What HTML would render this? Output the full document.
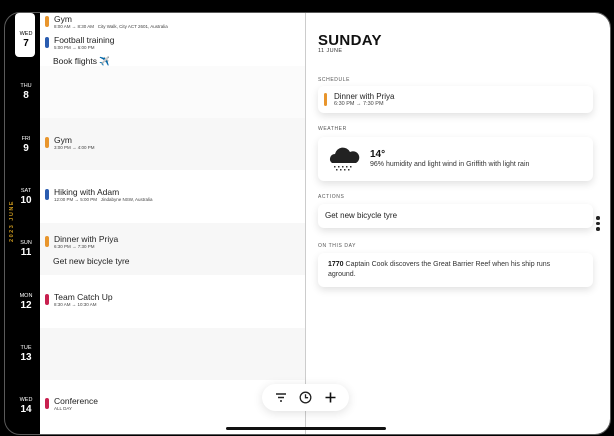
<!DOCTYPE html><html><head><style>
*{margin:0;padding:0;box-sizing:border-box}
body{width:614px;height:436px;background:#000;overflow:hidden;font-family:"Liberation Sans",sans-serif;position:relative;color:#222}
.scr{position:absolute;left:4px;top:12px;width:607px;height:423px;border:1.5px solid #5a5a5a;border-radius:16px;background:#000;overflow:hidden}
.main{position:absolute;left:35px;top:0;right:0;bottom:0;background:#fff}
.row{position:absolute;left:0;width:265px;height:52.4px}
.alt{background:#f7f7f7}
.div{position:absolute;left:265px;top:0;bottom:0;width:1px;background:#ccc}
.day{position:absolute;left:0;width:36px;text-align:center;color:#fff}
.day .d{font-size:5.5px;line-height:7px}
.day .n{font-size:10px;font-weight:bold;line-height:11px}
.sel{position:absolute;left:15px;top:13px;width:20px;height:44px;background:#fff;border-radius:4px}
.ev{position:absolute;left:49px}
.bar{position:absolute;left:-4px;top:1px;width:3.5px;height:11px;border-radius:2px}
.t{font-size:8.5px;line-height:9px;padding-left:5px;color:#222}
.s{font-size:4.5px;line-height:6px;padding-left:5px;color:#444}
.task{position:absolute;left:53px;font-size:8.5px;color:#222}
.lab{position:absolute;left:318px;font-size:5px;letter-spacing:.6px;color:#555}
.card{position:absolute;left:318px;width:275px;background:#fff;border-radius:6px;box-shadow:0 3px 8px rgba(0,0,0,.12)}
</style></head><body>
<div class="scr">
<div class="main">
<div class="row" style="top:53px;background:#fbfbfb"></div>
<div class="row alt" style="top:105px"></div>
<div class="row alt" style="top:210px"></div>
<div class="row alt" style="top:315px"></div>
<div class="div"></div>
</div>
</div>
<div class="sel"></div>
<div class="day" style="left:8px;top:31px;color:#000"><div class="d">WED</div><div class="n">7</div></div>
<div class="day" style="left:8px;top:83px"><div class="d">THU</div><div class="n">8</div></div>
<div class="day" style="left:8px;top:136px"><div class="d">FRI</div><div class="n">9</div></div>
<div class="day" style="left:8px;top:188px"><div class="d">SAT</div><div class="n">10</div></div>
<div class="day" style="left:8px;top:240px"><div class="d">SUN</div><div class="n">11</div></div>
<div class="day" style="left:8px;top:293px"><div class="d">MON</div><div class="n">12</div></div>
<div class="day" style="left:8px;top:345px"><div class="d">TUE</div><div class="n">13</div></div>
<div class="day" style="left:8px;top:397px"><div class="d">WED</div><div class="n">14</div></div>
<div style="position:absolute;left:-16px;top:218px;width:56px;text-align:center;transform:rotate(-90deg);font-size:5.5px;letter-spacing:1.5px;color:#c8961e;font-weight:bold">2023 JUNE</div>

<div class="ev" style="top:15px"><div class="bar" style="background:#e8952c"></div><div class="t">Gym</div><div class="s">8:00 AM → 8:30 AM &nbsp; City Walk, City ACT 2601, Australia</div></div>
<div class="ev" style="top:36px"><div class="bar" style="background:#2a5cb0"></div><div class="t">Football training</div><div class="s">5:00 PM → 6:00 PM</div></div>
<div class="task" style="top:56px">Book flights ✈️</div>
<div class="ev" style="top:136px"><div class="bar" style="background:#e8952c"></div><div class="t">Gym</div><div class="s">3:00 PM → 4:00 PM</div></div>
<div class="ev" style="top:188px"><div class="bar" style="background:#2a5cb0"></div><div class="t">Hiking with Adam</div><div class="s">12:00 PM → 5:00 PM &nbsp; Jindabyne NSW, Australia</div></div>
<div class="ev" style="top:235px"><div class="bar" style="background:#e8952c"></div><div class="t">Dinner with Priya</div><div class="s">6:30 PM → 7:30 PM</div></div>
<div class="task" style="top:256px">Get new bicycle tyre</div>
<div class="ev" style="top:293px"><div class="bar" style="background:#c8204f"></div><div class="t">Team Catch Up</div><div class="s">8:30 AM → 10:30 AM</div></div>
<div class="ev" style="top:397px"><div class="bar" style="background:#c8204f"></div><div class="t">Conference</div><div class="s">ALL DAY</div></div>

<div style="position:absolute;left:318px;top:32px;font-size:15px;font-weight:bold;color:#111;letter-spacing:.3px">SUNDAY</div>
<div style="position:absolute;left:318px;top:48px;font-size:5.5px;color:#333;letter-spacing:.4px">11 JUNE</div>
<div class="lab" style="top:77px">SCHEDULE</div>
<div class="card" style="top:86px;height:27px"><div style="position:absolute;left:6px;top:7px;width:3px;height:13px;border-radius:2px;background:#e8952c"></div><div style="position:absolute;left:16px;top:6px;font-size:8px;color:#222">Dinner with Priya</div><div style="position:absolute;left:16px;top:15px;font-size:5.5px;color:#444">6:30 PM → 7:30 PM</div></div>
<div class="lab" style="top:126px">WEATHER</div>
<div class="card" style="top:137px;height:44px">
<svg style="position:absolute;left:10px;top:6px" width="32" height="30" viewBox="0 0 32 30"><path d="M4 20a5 5 0 0 1 3-9a8 8 0 0 1 15-2a6 6 0 0 1 6 11z" fill="#222"/><g fill="#333"><rect x="6" y="23" width="1.5" height="1.5"/><rect x="10" y="23" width="1.5" height="1.5"/><rect x="14" y="23" width="1.5" height="1.5"/><rect x="18" y="23" width="1.5" height="1.5"/><rect x="22" y="23" width="1.5" height="1.5"/><rect x="8" y="26" width="1.5" height="1.5"/><rect x="12" y="26" width="1.5" height="1.5"/><rect x="16" y="26" width="1.5" height="1.5"/><rect x="20" y="26" width="1.5" height="1.5"/></g></svg>
<div style="position:absolute;left:52px;top:12px;font-size:10px;font-weight:bold;color:#111">14°</div>
<div style="position:absolute;left:52px;top:24px;font-size:7px;color:#333">96% humidity and light wind in Griffith with light rain</div></div>
<div class="lab" style="top:194px">ACTIONS</div>
<div class="card" style="top:204px;height:24px"><div style="position:absolute;left:7px;top:7px;font-size:8px;color:#222">Get new bicycle tyre</div></div>
<div style="position:absolute;left:596px;top:216px;width:4px">
<div style="width:3.5px;height:3.5px;border-radius:50%;background:#222;margin-bottom:2px"></div><div style="width:3.5px;height:3.5px;border-radius:50%;background:#222;margin-bottom:2px"></div><div style="width:3.5px;height:3.5px;border-radius:50%;background:#222"></div></div>
<div class="lab" style="top:243px">ON THIS DAY</div>
<div class="card" style="top:253px;height:34px"><div style="position:absolute;left:10px;top:7px;width:230px;font-size:7px;line-height:10px;color:#333"><b style="color:#111">1770</b> Captain Cook discovers the Great Barrier Reef when his ship runs aground.</div></div>

<div style="position:absolute;left:262px;top:384px;width:87px;height:27px;background:#fff;border-radius:14px;box-shadow:0 2px 10px rgba(0,0,0,.12)">
<svg style="position:absolute;left:13px;top:8px" width="12" height="11" viewBox="0 0 12 11"><path d="M1 2h10M3 5.5h6M5 9h2" stroke="#222" stroke-width="1.6"/></svg>
<svg style="position:absolute;left:37px;top:7px" width="13" height="13" viewBox="0 0 13 13"><circle cx="6.5" cy="6.5" r="5.3" fill="none" stroke="#222" stroke-width="1.3"/><path d="M6.5 3.3v3.4h2.6" fill="none" stroke="#222" stroke-width="1.3"/></svg>
<svg style="position:absolute;left:62px;top:7px" width="13" height="13" viewBox="0 0 13 13"><path d="M6.5 1.5v10M1.5 6.5h10" stroke="#111" stroke-width="1.6"/></svg>
</div>
<div style="position:absolute;left:226px;top:427px;width:160px;height:3px;border-radius:2px;background:#111"></div>
</body></html>
